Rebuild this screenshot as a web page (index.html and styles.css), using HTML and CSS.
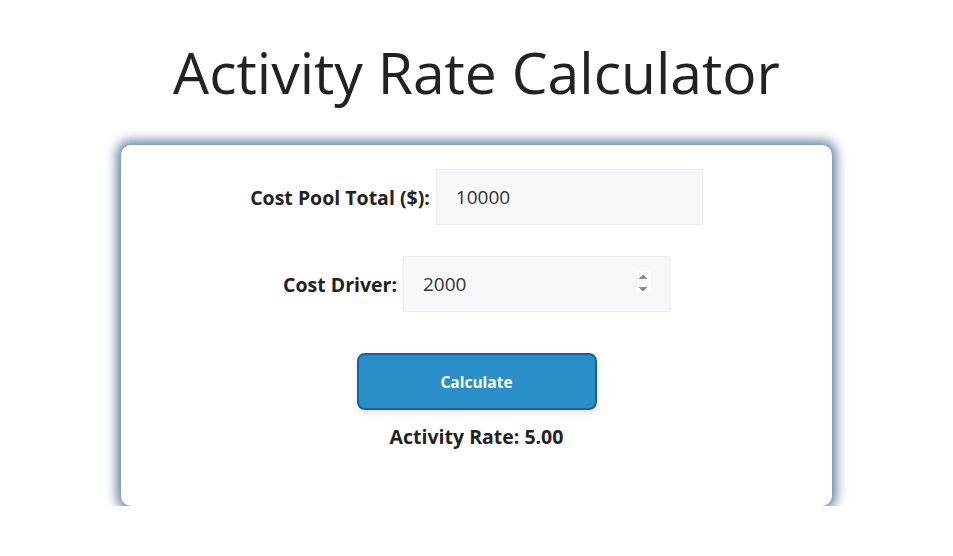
FILE: index.html
```html
<!DOCTYPE html>
<html>
<head>
    <meta charset="UTF-8">
    <link rel="stylesheet" href="styles.css">
</head>
<body>
    <h1 class="title">Activity Rate Calculator</h1>

    <div class="card">
        <div class="field">
            <label for="costPool">Cost Pool Total ($):</label>
            <input type="text" id="costPool" value="10000">
        </div>

        <div class="field">
            <label for="costDriver">Cost Driver:</label>
            <input type="number" id="costDriver" value="2000">
        </div>

        <button id="calcBtn">Calculate</button>

        <div class="result" id="result">Activity Rate: 5.00</div>
    </div>
</body>
</html>
```

FILE: styles.css
```css
body {
    margin: 0;
    padding: 0 121px;
    font-family: 'Open Sans', 'Noto Sans', Arial, sans-serif;
    background: #fff;
    color: #222;
}

.title {
    margin: 0;
    padding-top: 33px;
    height: 145px;
    box-sizing: border-box;
    font-size: 57px;
    font-weight: 400;
    line-height: 78px;
    text-align: center;
    color: #222;
}

.card {
    background: white;
    border-radius: 10px;
    box-shadow: 0 0 12px 4px rgba(65, 100, 140, 0.85);
    padding: 24px 20px 56px;
    display: flex;
    flex-direction: column;
    align-items: center;
}

.field {
    display: flex;
    align-items: center;
    gap: 6px;
    margin-bottom: 31px;
}

.field label {
    font-weight: 700;
    font-size: 19.5px;
    color: #222;
}

input {
    width: 267px;
    height: 56px;
    box-sizing: border-box;
    padding: 0 18px 0 19px;
    border: 1px solid #eceef0;
    background: #f7f8fa;
    font-family: inherit;
    font-size: 19px;
    color: #333;
}

input:focus {
    outline: none;
}

input[type=number]::-webkit-inner-spin-button {
    opacity: 1;
    height: 24px;
}

button {
    margin-top: 10px;
    width: 240px;
    height: 57px;
    background: #2a8ec8;
    color: white;
    border: 2px solid #1a5fa3;
    border-radius: 8px;
    font-family: inherit;
    font-weight: 700;
    font-size: 15.5px;
    cursor: pointer;
    box-shadow: 0 3px 6px rgba(0, 0, 0, 0.12);
}

.result {
    margin-top: 13px;
    font-weight: 700;
    font-size: 19.5px;
    color: #222;
}
```
